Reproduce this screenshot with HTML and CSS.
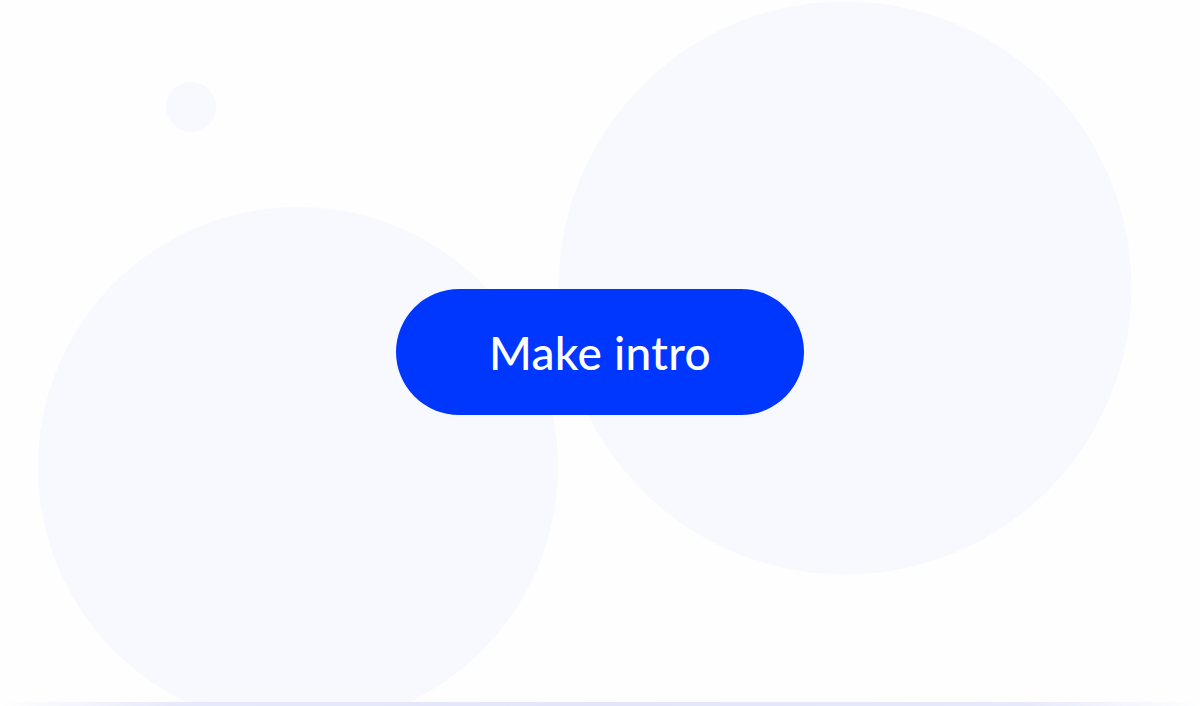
FILE: index.html
```html
<!DOCTYPE html>
<html lang="en">
<head>
<meta charset="utf-8">
<title>Make intro</title>
<link rel="stylesheet" href="styles.css">
</head>
<body>
<div class="stage">
  <div class="main">
    <button class="intro-btn" type="button">Make intro</button>
  </div>
  <div class="baseline"></div>
</div>
</body>
</html>
```
FILE: styles.css
```css
html, body {
  margin: 0;
  padding: 0;
  background: #fefefe;
}
.stage {
  width: 1200px;
  height: 706px;
  display: flex;
  flex-direction: column;
  overflow: hidden;
  background:
    radial-gradient(circle at 191px 107px, #f8f9fe 0, #f8f9fe 24.5px, rgba(248,249,254,0) 25.5px),
    radial-gradient(circle at 298px 467px, #f8f9fe 0, #f8f9fe 259.5px, rgba(248,249,254,0) 260.5px),
    radial-gradient(circle at 845px 288px, #f8f9fe 0, #f8f9fe 286px, rgba(248,249,254,0) 287px),
    #fefefe;
}
.main {
  flex: 1;
  display: flex;
  align-items: center;
  justify-content: center;
  padding-top: 2px;
}
.intro-btn {
  width: 408px;
  height: 126px;
  border: none;
  border-radius: 63px;
  background: #0037ff;
  color: #ffffff;
  font-family: "Lato", "Noto Sans", sans-serif;
  font-size: 46px;
  font-weight: 500;
  letter-spacing: 0.3px;
  cursor: pointer;
  padding: 0;
}
.baseline {
  height: 4px;
  background: linear-gradient(to right, rgba(228,230,251,0) 0%, #e6e8fb 15%, #e3e5fa 50%, #e6e8fb 85%, rgba(228,230,251,0) 100%);
}
```
